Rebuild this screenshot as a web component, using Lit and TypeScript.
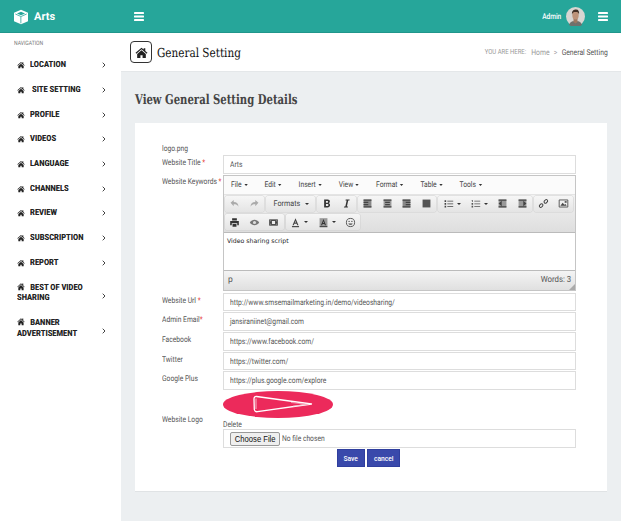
import { LitElement, html, css, svg } from 'lit';
import { customElement } from 'lit/decorators.js';

const home = (size: number, color = '#222') => html`<svg class="home" width=${size} height=${size} viewBox="0 0 24 24" fill=${color}>
  <path d="M12 3 1 12.600l1.400 1.600L12 6l9.600 8.200 1.400-1.600-4-3.500V4h-3v2.500z"/>
  <path d="M12 8 4 14.800V22h6v-5h4v5h6v-7.200z"/>
</svg>`;

const burger = html`<svg width="10" height="9" viewBox="0 0 10 9" fill="#fff"><rect width="10" height="2" rx=".4"/><rect y="3.500" width="10" height="2" rx=".4"/><rect y="7" width="10" height="2" rx=".4"/></svg>`;

const chevron = html`<svg class="chev" width="4" height="6" viewBox="0 0 4 6" fill="none" stroke="#444" stroke-width="1"><path d="M.7.700 3 3 .7 5.300"/></svg>`;

const ICON = '#555';
const icons: Record<string, unknown> = {
  undo: svg`<path d="M2 6l4-3.500V5c4 0 6 2 6 6-1.200-2.400-3-3-6-3v2.500z" fill="#aaa"/>`,
  redo: svg`<path d="M12 6 8 2.500V5c-4 0-6 2-6 6 1.200-2.400 3-3 6-3v2.500z" fill="#aaa"/>`,
  bold: svg`<path d="M4 2h4.500c3.500 0 3.500 4 1.300 4.700C12.500 7.500 12 12 8.500 12H4zm2.300 1.700v2.200h1.800c1.300 0 1.300-2.200 0-2.200zm0 3.800v2.800h2c1.600 0 1.600-2.800 0-2.800z" fill="#333"/>`,
  italic: svg`<path d="M6 2h5l-.3 1.200H9.200L7.500 10.800H9L8.700 12H3.700L4 10.800h1.500l1.700-7.600H5.700z" fill="#333"/>`,
  left: svg`<path d="M2 2h10v10H2z" fill="#888"/><path d="M2 2h10v1.500H2zm0 2.800h6v1.500H2zm0 2.800h6v1.500H2zm0 2.900h10V12H2z" fill="#444"/>`,
  center: svg`<path d="M2 2h10v10H2z" fill="#999"/><path d="M2 2h10v1.500H2zm2 2.800h6v1.500H4zm0 2.800h6v1.500H4zM2 10.500h10V12H2z" fill="#444"/>`,
  right: svg`<path d="M2 2h10v10H2z" fill="#888"/><path d="M2 2h10v1.500H2zm4 2.800h6v1.500H6zm0 2.800h6v1.500H6zM2 10.500h10V12H2z" fill="#444"/>`,
  justify: svg`<path d="M2 2h10v10H2z" fill="${ICON}"/>`,
  bullets: svg`<path d="M2 3h2v2H2zm0 3.500h2v2H2zM2 10h2v2H2zM5.500 3.500H13v1H5.500zm0 3.500H13v1H5.500zm0 3.500H13v1H5.500z" fill="#444"/>`,
  numbers: svg`<path d="M2 2.500h1.500v2.500H2.500V3.300H2zM2 6.500h2v2H2zM2 10h2v2H2zM5.500 3.500H13v1H5.500zm0 3.500H13v1H5.500zm0 3.500H13v1H5.500z" fill="#555"/>`,
  outdent: svg`<path d="M2 2h10v10H2z" fill="#999"/><path d="M2 2h10v1.500H2zM2 10.500h10V12H2zM6 3.500 2 7l4 3.500z" fill="#444"/>`,
  indent: svg`<path d="M2 2h10v10H2z" fill="#999"/><path d="M2 2h10v1.500H2zM2 10.500h10V12H2zM8 3.500 12 7l-4 3.500z" fill="#444"/>`,
  link: svg`<g fill="none" stroke="#444" stroke-width="1.300"><rect x="1.500" y="8" width="5" height="3.400" rx="1.700" transform="rotate(-45 4 9.700)"/><rect x="7.500" y="2.600" width="5" height="3.400" rx="1.700" transform="rotate(-45 10 4.300)"/></g>`,
  image: svg`<path d="M1.500 2.500h11v9h-11z" fill="none" stroke="#555" stroke-width="1.200"/><path d="M3 10 6 6l2 2.500 1.500-1L11 10z" fill="#444"/><path d="M8.500 4h2.500v2H8.500z" fill="#444"/>`,
  print: svg`<path d="M4 1.500h6v3H4zM1.500 5h11v5.500h-2V8h-7v2.500h-2zM4.500 9h5v3.500h-5z" fill="#333"/>`,
  preview: svg`<path d="M1 7c3-4.500 9-4.500 12 0-3 4.500-9 4.500-12 0z" fill="#777"/><circle cx="7" cy="7" r="2" fill="#ddd"/>`,
  media: svg`<path d="M1.500 3h11v8h-11z" fill="#444"/><path d="M3 4.500h1v1H3zm0 4h1v1H3zm7-4h1v1h-1zm0 4h1v1h-1z" fill="#eee"/><path d="M5 5h4v4H5z" fill="#eee"/>`,
  textcolor: svg`<path d="M7 1.500 10.800 10.500H9.200l-.8-2H5.600l-.8 2H3.200zM6.200 7h1.600L7 5z" fill="#444"/><path d="M2.500 11.500h9V13h-9z" fill="#444"/>`,
  backcolor: svg`<path d="M2 1.500h10v10H2z" fill="#999"/><path d="M7 2.500 10.200 10.500H8.800L8.200 9H5.800l-.6 1.500H3.800zM6.300 7.500h1.400L7 5.500z" fill="#333"/><path d="M2 11.500h10V13H2z" fill="#444"/>`,
  smile: svg`<circle cx="7" cy="7" r="5.200" fill="none" stroke="#444" stroke-width="1.100"/><circle cx="5.200" cy="5.600" r=".8" fill="#444"/><circle cx="8.800" cy="5.600" r=".8" fill="#444"/><path d="M4.200 8.200c.8 2.200 4.800 2.200 5.600 0z" fill="#444"/>`,
};

const tool = (name: string, caret = false) => html`<span class="tool ${caret ? 'split' : ''}">
  <svg width="11" height="11" viewBox="0 0 14 14">${icons[name]}</svg>${caret ? html`<i class="caret"></i>` : ''}
</span>`;

@customElement('app-root')
export class AppRoot extends LitElement {
  // the reference text is Roboto squeezed sideways, so the text boxes get a scaleX
  static styles = css`
    :host {
      display: block;
      width: 621px;
      height: 521px;
      overflow: hidden;
      font-family: Roboto, "Liberation Sans", sans-serif;
      text-rendering: geometricPrecision;
      background: #eceff1;
    }

    .tx {
      display: inline-block;
      white-space: nowrap;
      transform: scaleX(0.84);
      transform-origin: 0 50%;
    }

    .top {
      height: 33px;
      background: #26a69a;
      display: flex;
      align-items: center;
      color: #fff;
      box-shadow: inset 0 -1px 0 #20968b;
    }

    .brand {
      width: 134px;
      padding-left: 13px;
      box-sizing: border-box;
      display: flex;
      align-items: center;
      gap: 5px;
      font-size: 11px;
      font-weight: 700;
    }

    .top-right {
      margin-left: auto;
      display: flex;
      align-items: center;
      padding-right: 13px;
      font-size: 8px;
      font-weight: 500;
    }

    .admin {
      transform: scaleX(0.82);
      transform-origin: 100% 50%;
    }

    .avatar {
      margin: 0 13px 0 5px;
      display: block;
    }

    .body {
      display: flex;
      height: 488px;
    }

    .side {
      width: 121px;
      flex: none;
      background: #fff;
      box-sizing: border-box;
      padding: 7px 0 0 17px;
    }

    .nav-title {
      font-size: 6px;
      color: #777;
      margin: 0 0 0 -3px;
      height: 13px;
      line-height: 7px;
      transform: scaleX(0.84);
      transform-origin: 0 50%;
    }

    .item {
      display: flex;
      align-items: center;
      width: 88.500px;
      height: 24.700px;
      font-size: 8.500px;
      font-weight: 900;
      color: #222;
    }

    .item .home {
      margin-right: 5px;
      flex: none;
    }

    .item.shift .home {
      margin-right: 7px;
    }

    .item .tx {
      transform: scaleX(0.88);
    }

    .item .chev {
      margin-left: auto;
      flex: none;
    }

    .item.two {
      height: 35.500px;
      line-height: 10.500px;
    }

    .item.two .home {
      margin-right: 6px;
      vertical-align: -1px;
    }

    .item.two .chev {
      margin-top: 6px;
    }

    .main {
      flex: 1;
      min-width: 0;
    }

    .head {
      height: 38px;
      background: #fff;
      display: flex;
      align-items: center;
      padding: 0 13px 0 9px;
      box-shadow: 0 1px 0 #e4e7e9;
    }

    .home-box {
      width: 20px;
      height: 20px;
      flex: none;
      border: 1px solid #333;
      border-radius: 4px;
      display: flex;
      align-items: center;
      justify-content: center;
      margin-right: 5px;
    }

    .head h1 {
      font-family: "DejaVu Serif Condensed", "DejaVu Serif", serif;
      font-size: 12.500px;
      font-weight: 400;
      color: #111;
      margin: 0;
      white-space: nowrap;
      transform: scaleX(0.93);
      transform-origin: 0 50%;
    }

    .crumbs {
      margin-left: auto;
      display: flex;
      align-items: center;
      flex: none;
      font-size: 8px;
      color: #999;
      transform: scaleX(0.85);
      transform-origin: 100% 50%;
    }

    .crumbs .here {
      font-size: 7px;
      margin-right: 6px;
    }

    .crumbs .sep {
      margin: 0 5px;
    }

    .crumbs .cur {
      color: #555;
    }

    .content {
      padding: 22px 14px 0;
    }

    h2 {
      font-family: "DejaVu Serif Condensed", "DejaVu Serif", serif;
      font-size: 13.500px;
      font-weight: 700;
      color: #444;
      margin: 0 0 15px;
      line-height: 15px;
      white-space: nowrap;
      transform: scaleX(0.83);
      transform-origin: 0 50%;
    }

    .card {
      background: #fff;
      height: 368px;
      box-sizing: border-box;
      padding: 21px 31px 0 27px;
      box-shadow: 0 1px 0 #e0e3e5;
    }

    .logo-name {
      font-size: 8px;
      color: #555;
      height: 11px;
      line-height: 10px;
    }

    .form {
      display: grid;
      grid-template-columns: 61px 353px;
      row-gap: 1px;
      font-size: 8px;
      color: #555;
    }

    .lab {
      line-height: 11px;
      padding-top: 2px;
      white-space: nowrap;
    }

    .lab.kw {
      padding-top: 1px;
    }

    .req {
      color: #e53935;
    }

    .input {
      height: 18.700px;
      box-sizing: border-box;
      border: 1px solid #ddd;
      padding-left: 6px;
      display: flex;
      align-items: center;
      color: #555;
      background: #fff;
    }

    .editor {
      height: 116px;
      border: 1px solid #c5c5c5;
      box-sizing: border-box;
      display: flex;
      flex-direction: column;
      margin-bottom: 1px;
    }

    .menu {
      height: 18px;
      flex: none;
      box-sizing: content-box;
      background: #fbfbfb;
      padding-left: 7px;
      color: #444;
      border-bottom: 1px solid #e4e4e4;
    }

    .menu-row {
      height: 18px;
      display: flex;
      align-items: center;
      gap: 20.200px;
      transform: scaleX(0.84);
      transform-origin: 0 50%;
    }

    .menu-row span {
      display: flex;
      align-items: center;
    }

    .caret {
      display: inline-block;
      width: 0;
      height: 0;
      border: 2px solid transparent;
      border-top: 2.500px solid #333;
      border-bottom: 0;
      margin-left: 3px;
    }

    .bars {
      height: 37px;
      flex: none;
      background: linear-gradient(#f2f2f2, #dedede);
      border-bottom: 1px solid #bbb;
      padding-left: 1px;
    }

    .bar {
      display: flex;
      height: 18.500px;
      align-items: center;
      gap: 1px;
    }

    .group {
      display: flex;
      align-items: center;
      height: 16px;
      background: linear-gradient(#f6f6f6, #e4e4e4);
      box-shadow: 0 0 0 .5px #cfcfcf;
      border-radius: 2px;
      margin-right: 1px;
    }

    .tool {
      display: flex;
      align-items: center;
      justify-content: center;
      min-width: 19.500px;
      height: 16px;
    }

    .tool.split {
      width: 27.500px;
    }

    .tool.wide {
      width: 49px;
      color: #444;
    }

    .tool.wide .tx {
      transform-origin: 50% 50%;
      transform: scaleX(0.9);
    }

    .text {
      flex: 1;
      font-family: "DejaVu Sans", Verdana, sans-serif;
      font-size: 6.200px;
      color: #222;
      padding: 4px 3px;
      background: #fff;
      line-height: 9px;
    }

    .status {
      height: 20px;
      flex: none;
      box-sizing: border-box;
      background: linear-gradient(#f4f4f4, #e0e0e0);
      border-top: 1px solid #bbb;
      display: flex;
      align-items: center;
      justify-content: space-between;
      padding: 0 4px;
      font-size: 8.500px;
      color: #555;
      position: relative;
    }

    .words {
      transform: scaleX(0.92);
      transform-origin: 100% 50%;
    }

    .grip {
      position: absolute;
      right: 0;
      bottom: 0;
    }

    .logo-cell {
      display: flex;
      flex-direction: column;
    }

    .logo {
      display: block;
    }

    .delete {
      height: 11px;
      line-height: 13px;
    }

    .file {
      height: 19px;
      box-sizing: border-box;
      border: 1px solid #ddd;
      display: flex;
      align-items: center;
      padding-left: 6px;
    }

    .choose {
      font-family: "Liberation Sans", Arial, sans-serif;
      font-size: 8.700px;
      color: #111;
      height: 14px;
      width: 50px;
      flex: none;
      box-sizing: border-box;
      padding: 0;
      border: 1px solid #999;
      border-radius: 2px;
      background: #efefef;
      margin-right: 2px;
    }

    .choose .tx {
      transform-origin: 50% 50%;
      transform: scaleX(0.88);
    }

    .actions {
      grid-column: 2;
      display: flex;
      gap: 2px;
      padding: 0 0 0 114px;
    }

    .btn {
      height: 18px;
      background: #3949ab;
      color: #fff;
      border: 1px solid #2f3e9e;
      box-sizing: border-box;
      font-family: inherit;
      font-size: 8px;
      font-weight: 500;
      padding: 0;
    }

    .btn .tx {
      transform-origin: 50% 50%;
    }

    .save {
      width: 28px;
    }

    .cancel {
      width: 33px;
    }

    .logo-lab {
      padding-top: 23px;
    }
  `;

  render() {
    return html`
      <div class="top">
        <div class="brand">
          <svg width="16" height="16" viewBox="0 0 24 24">
            <path d="M12 1 22.500 5.500v13L12 23 1.500 18.500v-13z" fill="#fff"/>
            <path d="M12 4.200 6 6.800l6 2.600 6-2.600z" fill="#26a69a"/>
            <path d="M3.500 7.500 11.800 11.200V21.500M20.500 7.500 12.200 11.200" fill="none" stroke="#26a69a" stroke-width="1.200"/>
          </svg>
          <span>Arts</span>
        </div>
        ${burger}
        <div class="top-right">
          <span class="admin">Admin</span>
          <svg class="avatar" width="19" height="19" viewBox="0 0 19 19">
            <circle cx="9.500" cy="9.500" r="9.500" fill="#d8d6d2"/>
            <path d="M3 18c1-3.500 3.500-4 6.500-4s5.500.5 6.500 4c-1.800 1.300-4 1.800-6.500 1.800S4.800 19.300 3 18z" fill="#6f716c"/>
            <path d="M7.500 11h4v4l-2 1.500-2-1.500z" fill="#9c7860"/>
            <ellipse cx="9.500" cy="8" rx="3.200" ry="4.600" fill="#bd9378"/>
            <path d="M6 7.500C5.500 3.500 8 2.500 10 2.500c2.500 0 3.500 2 3 5-.5-2-1-2.500-3.500-2.500-2 0-3 .5-3.500 2.500z" fill="#3f2f24"/>
          </svg>
          ${burger}
        </div>
      </div>
      <div class="body">
        <nav class="side">
          <div class="nav-title">NAVIGATION</div>
          ${['LOCATION', 'SITE SETTING', 'PROFILE', 'VIDEOS', 'LANGUAGE', 'CHANNELS', 'REVIEW', 'SUBSCRIPTION', 'REPORT'].map(
            (n) => html`<div class="item ${n === 'SITE SETTING' ? 'shift' : ''}">${home(8)}<span class="tx">${n}</span>${chevron}</div>`,
          )}
          ${[['BEST OF VIDEO', 'SHARING'], ['BANNER', 'ADVERTISEMENT']].map(
            ([a, b]) => html`<div class="item two"><span class="tx">${home(9)}${a}<br />${b}</span>${chevron}</div>`,
          )}
        </nav>
        <div class="main">
          <header class="head">
            <div class="home-box">${home(13, '#222')}</div>
            <h1>General Setting</h1>
            <div class="crumbs">
              <span class="here">YOU ARE HERE:</span>
              <span>Home</span>
              <span class="sep">&gt;</span>
              <span class="cur">General Setting</span>
            </div>
          </header>
          <div class="content">
            <h2>View General Setting Details</h2>
            <div class="card">
              <div class="logo-name"><span class="tx">logo.png</span></div>
              <div class="form">
                <div class="lab"><span class="tx">Website Title <span class="req">*</span></span></div>
                <div class="input"><span class="tx">Arts</span></div>
                <div class="lab kw"><span class="tx">Website Keywords <span class="req">*</span></span></div>
                <div class="editor">
                  <div class="menu">
                    <div class="menu-row">
                      ${['File', 'Edit', 'Insert', 'View', 'Format', 'Table', 'Tools'].map(
                        (m) => html`<span>${m}<i class="caret"></i></span>`,
                      )}
                    </div>
                  </div>
                  <div class="bars">
                    <div class="bar">
                      <div class="group">${tool('undo')}${tool('redo')}</div>
                      <div class="group"><span class="tool wide"><span class="tx">Formats</span><i class="caret"></i></span></div>
                      <div class="group">${tool('bold')}${tool('italic')}</div>
                      <div class="group">${tool('left')}${tool('center')}${tool('right')}${tool('justify')}</div>
                      <div class="group">${tool('bullets', true)}${tool('numbers', true)}${tool('outdent')}${tool('indent')}</div>
                      <div class="group">${tool('link')}${tool('image')}</div>
                    </div>
                    <div class="bar">
                      <div class="group">${tool('print')}${tool('preview')}${tool('media')}</div>
                      <div class="group">${tool('textcolor', true)}${tool('backcolor', true)}${tool('smile')}</div>
                    </div>
                  </div>
                  <div class="text">Video sharing script</div>
                  <div class="status">
                    <span>p</span><span class="words">Words: 3</span>
                    <svg class="grip" width="6" height="6" viewBox="0 0 6 6"><path d="M6 0v6H0z" fill="#aaa"/></svg>
                  </div>
                </div>
                <div class="lab"><span class="tx">Website Url <span class="req">*</span></span></div>
                <div class="input"><span class="tx">http://www.smsemailmarketing.in/demo/videosharing/</span></div>
                <div class="lab"><span class="tx">Admin Email<span class="req">*</span></span></div>
                <div class="input"><span class="tx">jansiraniinet@gmail.com</span></div>
                <div class="lab"><span class="tx">Facebook</span></div>
                <div class="input"><span class="tx">https://www.facebook.com/</span></div>
                <div class="lab"><span class="tx">Twitter</span></div>
                <div class="input"><span class="tx">https://twitter.com/</span></div>
                <div class="lab"><span class="tx">Google Plus</span></div>
                <div class="input"><span class="tx">https://plus.google.com/explore</span></div>
                <div class="lab logo-lab"><span class="tx">Website Logo</span></div>
                <div class="logo-cell">
                  <svg class="logo" width="110" height="27" viewBox="0 0 110 27">
                    <ellipse cx="55" cy="13.500" rx="55" ry="13.500" fill="#ec2a5b"/>
                    <path d="M33.500 5.500 88.500 13 34.500 20.700c-2 .2-3-.5-3.200-2.200L31 8c0-1.800 1-2.700 2.500-2.500z" fill="none" stroke="#fff" stroke-width="1.300" stroke-linejoin="round"/>
                    <path d="M33 7.500v10.500" stroke="#f7b9c9" stroke-width="1" fill="none"/>
                    <path d="M68 11.500 84 13.400 70 15.200" stroke="#f7b9c9" stroke-width=".7" fill="none"/>
                  </svg>
                  <div class="delete"><span class="tx">Delete</span></div>
                  <div class="file"><button class="choose"><span class="tx">Choose File</span></button><span class="tx">No file chosen</span></div>
                </div>
                <div class="actions">
                  <button class="btn save"><span class="tx">Save</span></button>
                  <button class="btn cancel"><span class="tx">cancel</span></button>
                </div>
              </div>
            </div>
          </div>
        </div>
      </div>
    `;
  }
}
